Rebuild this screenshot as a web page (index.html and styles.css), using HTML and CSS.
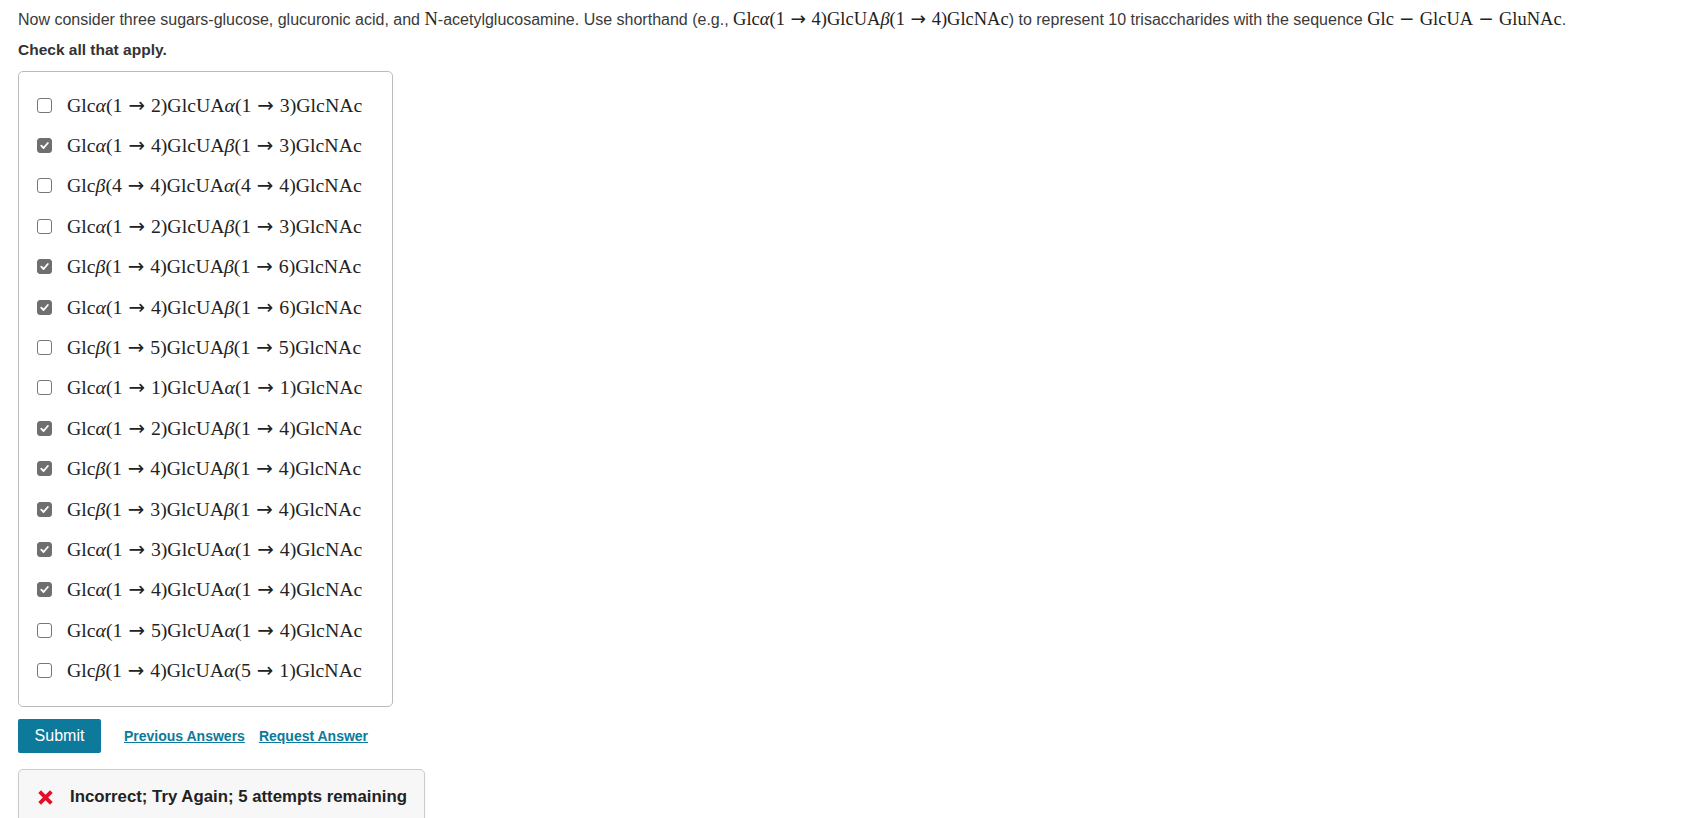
FILE: index.html
```html
<!DOCTYPE html>
<html>
<head>
<meta charset="utf-8">
<link rel="stylesheet" href="styles.css">
</head>
<body>
<div class="page">
  <p class="prompt">Now consider three sugars-glucose, glucuronic acid, and <span class="m">N</span>-acetylglucosamine. Use shorthand (e.g., <span class="m">Glc<i>α</i>(1<span class="ar">→</span>4)GlcUA<i>β</i>(1<span class="ar">→</span>4)GlcNAc</span>) to represent 10 trisaccharides with the sequence <span class="m">Glc<span class="mi">−</span>GlcUA<span class="mi">−</span>GluNAc</span>.</p>
  <p class="instr">Check all that apply.</p>
  <div class="options">
    <label class="opt"><span class="cb"></span><span class="m">Glc<i>α</i>(1<span class="ar">→</span>2)GlcUA<i>α</i>(1<span class="ar">→</span>3)GlcNAc</span></label>
    <label class="opt"><span class="cb on"><svg viewBox="0 0 14 14"><path d="M3.5 7.2 L6 9.7 L10.6 4.3" /></svg></span><span class="m">Glc<i>α</i>(1<span class="ar">→</span>4)GlcUA<i>β</i>(1<span class="ar">→</span>3)GlcNAc</span></label>
    <label class="opt"><span class="cb"></span><span class="m">Glc<i>β</i>(4<span class="ar">→</span>4)GlcUA<i>α</i>(4<span class="ar">→</span>4)GlcNAc</span></label>
    <label class="opt"><span class="cb"></span><span class="m">Glc<i>α</i>(1<span class="ar">→</span>2)GlcUA<i>β</i>(1<span class="ar">→</span>3)GlcNAc</span></label>
    <label class="opt"><span class="cb on"><svg viewBox="0 0 14 14"><path d="M3.5 7.2 L6 9.7 L10.6 4.3" /></svg></span><span class="m">Glc<i>β</i>(1<span class="ar">→</span>4)GlcUA<i>β</i>(1<span class="ar">→</span>6)GlcNAc</span></label>
    <label class="opt"><span class="cb on"><svg viewBox="0 0 14 14"><path d="M3.5 7.2 L6 9.7 L10.6 4.3" /></svg></span><span class="m">Glc<i>α</i>(1<span class="ar">→</span>4)GlcUA<i>β</i>(1<span class="ar">→</span>6)GlcNAc</span></label>
    <label class="opt"><span class="cb"></span><span class="m">Glc<i>β</i>(1<span class="ar">→</span>5)GlcUA<i>β</i>(1<span class="ar">→</span>5)GlcNAc</span></label>
    <label class="opt"><span class="cb"></span><span class="m">Glc<i>α</i>(1<span class="ar">→</span>1)GlcUA<i>α</i>(1<span class="ar">→</span>1)GlcNAc</span></label>
    <label class="opt"><span class="cb on"><svg viewBox="0 0 14 14"><path d="M3.5 7.2 L6 9.7 L10.6 4.3" /></svg></span><span class="m">Glc<i>α</i>(1<span class="ar">→</span>2)GlcUA<i>β</i>(1<span class="ar">→</span>4)GlcNAc</span></label>
    <label class="opt"><span class="cb on"><svg viewBox="0 0 14 14"><path d="M3.5 7.2 L6 9.7 L10.6 4.3" /></svg></span><span class="m">Glc<i>β</i>(1<span class="ar">→</span>4)GlcUA<i>β</i>(1<span class="ar">→</span>4)GlcNAc</span></label>
    <label class="opt"><span class="cb on"><svg viewBox="0 0 14 14"><path d="M3.5 7.2 L6 9.7 L10.6 4.3" /></svg></span><span class="m">Glc<i>β</i>(1<span class="ar">→</span>3)GlcUA<i>β</i>(1<span class="ar">→</span>4)GlcNAc</span></label>
    <label class="opt"><span class="cb on"><svg viewBox="0 0 14 14"><path d="M3.5 7.2 L6 9.7 L10.6 4.3" /></svg></span><span class="m">Glc<i>α</i>(1<span class="ar">→</span>3)GlcUA<i>α</i>(1<span class="ar">→</span>4)GlcNAc</span></label>
    <label class="opt"><span class="cb on"><svg viewBox="0 0 14 14"><path d="M3.5 7.2 L6 9.7 L10.6 4.3" /></svg></span><span class="m">Glc<i>α</i>(1<span class="ar">→</span>4)GlcUA<i>α</i>(1<span class="ar">→</span>4)GlcNAc</span></label>
    <label class="opt"><span class="cb"></span><span class="m">Glc<i>α</i>(1<span class="ar">→</span>5)GlcUA<i>α</i>(1<span class="ar">→</span>4)GlcNAc</span></label>
    <label class="opt"><span class="cb"></span><span class="m">Glc<i>β</i>(1<span class="ar">→</span>4)GlcUA<i>α</i>(5<span class="ar">→</span>1)GlcNAc</span></label>
  </div>
  <div class="actions">
    <button class="submit">Submit</button>
    <a class="link" href="#">Previous Answers</a>
    <a class="link" href="#">Request Answer</a>
  </div>
  <div class="feedback">
    <svg class="x" viewBox="0 0 16 16"><path d="M2.5 2.5 L13.5 13.5 M13.5 2.5 L2.5 13.5" /></svg>
    <span>Incorrect; Try Again; 5 attempts remaining</span>
  </div>
</div>
</body>
</html>
```
FILE: styles.css
```css
* { box-sizing: border-box; }
html, body { margin: 0; padding: 0; background: #fff; }
body { font-family: "Liberation Sans", Arial, sans-serif; color: #333; }
.page { padding: 0 18px; }
.prompt { margin: 0; padding-top: 9px; font-size: 16px; line-height: 20px; color: #3a3a3a; }
.prompt .m { font-size: 18.5px; }
.instr { margin: 10px 0 0; font-size: 15.5px; font-weight: bold; line-height: 20px; color: #333; }
.m { font-family: "Liberation Serif", "DejaVu Serif", serif; color: #222; }
.m i { font-style: italic; }
.ar { font-family: "DejaVu Sans", sans-serif; font-size: 1em; margin: 0 0.3em; }
.mi { font-family: "DejaVu Sans", sans-serif; margin: 0 0.28em; }
.options { margin-top: 11px; width: 375px; border: 1px solid #bbb; border-radius: 5px; padding: 13px 18px 15px 18px; }
.opt { display: flex; align-items: center; gap: 15px; height: 40.4px; }
.opt .m { font-size: 19.8px; }
.cb { width: 15px; height: 15px; border: 1.5px solid #777; border-radius: 3px; flex: none; background: #fff; display: flex; }
.cb.on { background: #6f6f6f; border-color: #6f6f6f; }
.cb svg { width: 100%; height: 100%; }
.cb svg path { fill: none; stroke: #fff; stroke-width: 2; stroke-linecap: round; stroke-linejoin: round; }
.actions { margin-top: 12px; display: flex; align-items: center; }
.submit { background: #0d7a9c; color: #fff; border: none; border-radius: 2px; font-family: "Liberation Sans", Arial, sans-serif; font-size: 16px; width: 83px; height: 34px; padding: 0; margin-right: 23px; }
.link { font-size: 14px; font-weight: bold; color: #0d7a9c; text-decoration: underline; margin-right: 14px; }
.feedback { margin-top: 16px; width: 407px; height: 60px; border: 1px solid #ccc; border-radius: 5px; background: #f7f7f7; display: flex; align-items: flex-start; padding: 17px 0 0 18px; gap: 16px; box-shadow: 0 1px 2px rgba(0,0,0,0.08); }
.feedback span { font-size: 16.8px; font-weight: bold; color: #222; line-height: 20px; }
.x { width: 17px; height: 17px; margin-top: 2px; }
.x path { stroke: #e0102a; stroke-width: 3.6; stroke-linecap: butt; }
```
